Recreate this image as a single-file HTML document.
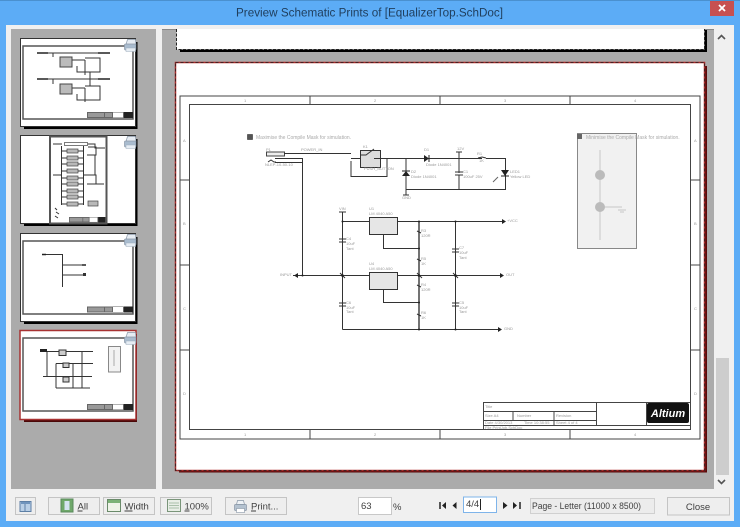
<!DOCTYPE html>
<html><head><meta charset="utf-8"><style>
html,body{margin:0;padding:0;background:#5cacf6;width:740px;height:527px;overflow:hidden}
svg{display:block;position:absolute;left:0;top:0}
text{font-family:"Liberation Sans",sans-serif}
#blur{filter:blur(.35px)}
.l{fill:none;stroke:#333;stroke-width:1}
.t{fill:#999;font-size:4px}
.b{fill:#eeeeee;stroke:#c4c4c4}
.bt{fill:#404040;font-size:9.5px}
</style></head><body>
<svg width="740" height="527" viewBox="0 0 740 527">
<defs>
<g id="pr"><path d="M3.500 0.500h8l.5 5h-10z" fill="#e6ecf3" stroke="#8a98a8" stroke-width=".7"/><rect x="0.500" y="5" width="11.500" height="6" rx="1" fill="#a9bccf" stroke="#8a98a8" stroke-width=".7"/><rect x="2" y="9" width="9.500" height="3.500" fill="#e6edf4" stroke="#a0aebd" stroke-width=".5"/></g>
<g id="tb"><rect x="0" y="0" width="46" height="6" fill="#666"/><rect x="1" y="1" width="16" height="4" fill="#999"/><rect x="18" y="1" width="7" height="4" fill="#999"/><rect x="26" y="0.500" width="10" height="5" fill="#fff"/><rect x="37" y="0" width="9" height="6" fill="#222"/></g>
</defs>
<rect width="740" height="527" fill="#5cacf6"/>
<rect x="0" y="0" width="740" height="1" fill="#4a90cf"/>
<text x="369.500" y="16.500" text-anchor="middle" font-size="12.300" fill="#203f5e" textLength="267" lengthAdjust="spacingAndGlyphs">Preview Schematic Prints of [EqualizerTop.SchDoc]</text>
<rect x="710" y="1" width="24" height="15" fill="#c75050"/>
<path d="M719 5l6 6M725 5l-6 6" stroke="#fff" stroke-width="1.800"/>
<rect x="6" y="25" width="728" height="496" fill="#f0f0f0"/>
<g id="blur">
<rect x="11" y="29" width="145" height="460" fill="#ababab"/>
<rect x="162" y="29" width="552" height="460" fill="#ababab"/>
<rect x="162" y="29" width="552" height="1" fill="#888"/>
<rect x="714" y="29" width="17" height="460" fill="#f0f0f0"/>
<rect x="716" y="358" width="13" height="117" fill="#cdcdcd"/>
<path d="M718 39l3.500-3.500 3.500 3.500" fill="none" stroke="#555" stroke-width="1.600"/>
<path d="M718 480l3.500 3.500 3.500-3.500" fill="none" stroke="#555" stroke-width="1.600"/>

<!-- previous page -->
<rect x="180" y="30" width="527" height="22" fill="#000"/>
<rect x="176.500" y="29" width="528" height="20.500" fill="#fff"/>
<path d="M176.500 29v20.500h528V29" fill="none" stroke="#222" stroke-dasharray="3 1.500"/>
<!-- current page -->
<rect x="179" y="66" width="528" height="406.500" fill="#5a0a0a"/>
<rect x="175.500" y="62.500" width="529" height="408" fill="#fff" stroke="#b02a2a" stroke-width="1.500"/>
<rect x="175.500" y="62.500" width="529" height="408" fill="none" stroke="#222" stroke-dasharray="3 2" stroke-width=".8"/>
<rect x="180" y="96" width="520" height="343" fill="#fff" stroke="#444"/>
<rect x="189.500" y="104.500" width="501" height="325" fill="#fff" stroke="#444"/>
<path d="M310 96v8M440 96v8M570 96v8M310 430v9M440 430v9M570 430v9M180 180h9M180 265h9M180 350h9M691 180h9M691 265h9M691 350h9" stroke="#444"/>
<g fill="#999" font-size="4"><text x="244" y="102">1</text><text x="374" y="102">2</text><text x="504" y="102">3</text><text x="634" y="102">4</text><text x="244" y="436">1</text><text x="374" y="436">2</text><text x="504" y="436">3</text><text x="634" y="436">4</text><text x="183" y="142">A</text><text x="183" y="225">B</text><text x="183" y="310">C</text><text x="183" y="395">D</text><text x="694" y="142">A</text><text x="694" y="225">B</text><text x="694" y="310">C</text><text x="694" y="395">D</text></g>

<!-- notes -->
<rect x="247.500" y="134.500" width="5" height="5" fill="#555" stroke="#333" stroke-width=".6"/>
<text x="256" y="139" font-size="5" fill="#aaa">Maximise the Compile Mask for simulation.</text>
<rect x="577.500" y="133.500" width="59" height="115" fill="#f1f1f1" stroke="#888"/>
<rect x="577" y="134" width="5" height="5" fill="#666"/>
<text x="586" y="139" font-size="5" fill="#aaa">Minimise the Compile Mask for simulation.</text>
<path d="M600 150V240M600 207h22M618 210h8M620 212h4" stroke="#c6c6c6" fill="none"/>
<circle cx="600" cy="175" r="5" fill="#bbb"/><circle cx="600" cy="207" r="5" fill="#bbb"/>

<!-- upper schematic -->
<rect x="266.500" y="152" width="18" height="4" fill="#eee" stroke="#444"/>
<path class="l" d="M284 153.500H351M268 162l3-2 3 2h2M275 158.500h27.500V275M275 162.500h27.500M351 161v15.500h36V158.500M351 158.500h9"/>
<rect x="360.500" y="150.500" width="20" height="17" fill="#ddd" stroke="#333"/>
<path class="l" d="M360 155h6l8-6M374 158.500h6"/>
<path class="l" d="M380 158.500H482M486 158.500H505.500V189.500H406V158.500M459 152V189.500M406 189.500V195"/>
<path d="M424 155v7l5-3.500z" fill="#222"/><path d="M429 155v7" stroke="#222"/>
<path d="M402 176h8l-4-5z" fill="#222"/><path d="M402 171h8" stroke="#222"/>
<path d="M501 170h8l-4 6z" fill="#222"/><path d="M501 176h8" stroke="#222"/>
<path d="M455 172h8M455 175h8" stroke="#333"/><rect x="456" y="173" width="6" height="1.500" fill="#fff"/>
<path d="M478 158l4-1 4 1" stroke="#333" fill="none"/>
<path d="M456 152h6" stroke="#333"/><path d="M403 195h6" stroke="#333"/>
<path d="M495 180l3-3M493 182l3-3" stroke="#666"/>
<g><text class="t" x="266" y="151">P1</text><text class="t" x="301" y="151">POWER_IN</text><text class="t" x="265" y="166">NLEP-10-50-10</text><text class="t" x="363" y="148">K1</text><text class="t" x="364" y="170">PUSH_BUTTON</text><text class="t" x="424" y="151">D1</text><text class="t" x="411" y="173">D2</text><text class="t" x="411" y="178">Diode 1N4001</text><text class="t" x="426" y="166">Diode 1N4001</text><text class="t" x="457" y="150">12V</text><text class="t" x="463" y="173">C1</text><text class="t" x="463" y="178">100uF 25V</text><text class="t" x="477" y="155">R1</text><text class="t" x="479" y="162">1K</text><text class="t" x="510" y="173">LED1</text><text class="t" x="510" y="178">Yellow LED</text><text class="t" x="402" y="199">GND</text></g>

<!-- lower schematic -->
<path class="l" d="M342.500 212V329.500M339 212h7M342.500 221.500H369M397 221.500H502M293 275.500H369M397 275.500H500M342.500 329.500H498M383.500 234V248.500H419M383.500 289V302.500H419M455.500 221.500V329.500"/>
<path d="M419 221.500V329.500" stroke="#444" stroke-width="1.500"/>
<rect x="369.500" y="217.500" width="28" height="17" fill="#e6e6e6" stroke="#333"/>
<rect x="369.500" y="272.500" width="28" height="17" fill="#e6e6e6" stroke="#333"/>
<path d="M502 219v5l4-2.500zM500 273v5l4-2.500zM498 327v5l4-2.500zM298 273v5l-4-2.500z" fill="#222"/>
<g stroke="#333" fill="none"><path d="M339 239h7M339 242h7M452 249h7M452 252h7M339 303h7M339 306h7M452 303h7M452 306h7"/><path d="M417 231l4 2M417 259l4 2M417 285l4 2M417 314l4 2M340 273l5 5M453 273l5 5M417 273l5 5"/></g>
<g fill="#222"><circle cx="342.500" cy="221.500" r="1"/><circle cx="342.500" cy="275.500" r="1.300"/><circle cx="419" cy="275.500" r="1.300"/><circle cx="455.500" cy="275.500" r="1.300"/><circle cx="302.500" cy="275.500" r="1"/><circle cx="419" cy="221.500" r="1"/><circle cx="455.500" cy="221.500" r="1"/><circle cx="419" cy="329.500" r="1"/><circle cx="455.500" cy="329.500" r="1"/><circle cx="419" cy="248.500" r="1"/><circle cx="419" cy="302.500" r="1"/></g>
<g><text class="t" x="369" y="210">U1</text><text class="t" x="369" y="215">LM 4040 A50</text><text class="t" x="369" y="265">U4</text><text class="t" x="369" y="270">LM 4040 A50</text><text class="t" x="339" y="210">VIN</text><text class="t" x="280" y="276">INPUT</text><text class="t" x="507" y="222">+VCC</text><text class="t" x="506" y="276">OUT</text><text class="t" x="504" y="330">GND</text>
<text class="t" x="346" y="240">C4</text><text class="t" x="346" y="245">10uF</text><text class="t" x="346" y="250">Tant</text><text class="t" x="346" y="304">C6</text><text class="t" x="346" y="309">10uF</text><text class="t" x="346" y="313">Tant</text>
<text class="t" x="459" y="249">C7</text><text class="t" x="459" y="254">10uF</text><text class="t" x="459" y="259">Tant</text><text class="t" x="459" y="304">C5</text><text class="t" x="459" y="309">10uF</text><text class="t" x="459" y="313">Tant</text>
<text class="t" x="421" y="232">R3</text><text class="t" x="421" y="237">120R</text><text class="t" x="421" y="260">R5</text><text class="t" x="421" y="265">1K</text><text class="t" x="421" y="286">R4</text><text class="t" x="421" y="291">120R</text><text class="t" x="421" y="314">R6</text><text class="t" x="421" y="319">1K</text></g>

<!-- title block -->
<path d="M483 402.500H690.500M483.500 402V430M483 411.500H596M483 420.500H596M596 425.500H483M483 425.500H690.500M596.500 402V425M646.500 402V425M513 411V420.500M554 411V425" stroke="#444" fill="none"/>
<rect x="647" y="403" width="42" height="20" rx="2" fill="#111"/>
<text x="668" y="417" text-anchor="middle" font-size="11" font-weight="bold" font-style="italic" fill="#fff">Altium</text>
<g><text class="t" x="485" y="408">Title</text><text class="t" x="485" y="417">Size A4</text><text class="t" x="517" y="417">Number</text><text class="t" x="556" y="417">Revision</text><text class="t" x="485" y="424">Date 4/30/2013</text><text class="t" x="524" y="424">Time 10:38:55</text><text class="t" x="556" y="424">Sheet 4 of 4</text><text class="t" x="485" y="429">File PrintJob.SchDoc</text></g>

<!-- thumbnail 1 -->
<rect x="24" y="42" width="113.500" height="87" fill="#000"/>
<rect x="20.500" y="38.500" width="115" height="88" fill="#fff" stroke="#333"/>
<rect x="23" y="46" width="110" height="73" fill="#fff" stroke="#555" stroke-width="1.500"/>
<path class="l" stroke-width=".8" d="M37 53h73M53 57V53M72 60h13M85 58h15V72H77V66M85 60V75M37 79h73M53 84V79M72 88h13M85 86h15V100H77V94M85 88V102M90 72V86"/>
<rect x="60" y="57" width="12" height="10" fill="#bbb" stroke="#444"/><rect x="60" y="84" width="12" height="10" fill="#bbb" stroke="#444"/>
<path d="M37 53h11M37 79h11M98 53h12M98 79h12" stroke="#222" stroke-width="1.500"/>
<use href="#tb" x="87" y="112"/><use href="#pr" x="124" y="39"/>

<!-- thumbnail 2 -->
<rect x="24" y="139" width="113.500" height="87" fill="#000"/>
<rect x="20.500" y="135.500" width="115" height="88" fill="#fff" stroke="#333"/>
<rect x="50" y="136.500" width="56.500" height="87" fill="#fff" stroke="#555" stroke-width="2"/>
<rect x="64.500" y="142.500" width="23" height="3" fill="#fff" stroke="#444" stroke-width=".7"/>
<g fill="#b9b9b9" stroke="#444" stroke-width=".7"><rect x="67" y="149" width="11" height="4"/><rect x="67" y="156" width="11" height="4"/><rect x="67" y="162" width="11" height="4"/><rect x="67" y="169" width="11" height="4"/><rect x="67" y="176" width="11" height="4"/><rect x="67" y="182" width="11" height="4"/><rect x="67" y="189" width="11" height="4"/><rect x="67" y="195" width="11" height="4"/><rect x="67" y="202" width="11" height="4"/><rect x="88" y="201" width="10" height="5"/></g>
<path class="l" stroke-width=".8" d="M61.500 146V205M83.500 146V205M61 151h6M78 151h6M61 158h6M78 158h6M61 164h6M78 164h6M61 171h6M78 171h6M61 178h6M78 178h6M61 184h6M78 184h6M61 191h6M78 191h6M61 197h6M78 197h6M61 204h6M78 204h6M88 144h7v4h10M88 147h8v8h-9M53 144h9M53 175h9M84 175h12v9h8M96 176v8h-9M95 155v20"/>
<g transform="translate(69 217) scale(.79 .9)"><use href="#tb"/></g><use href="#pr" x="124" y="136"/>
<path d="M55 208l2 2M56 212l3 2M55 216l3 2" stroke="#333"/>

<!-- thumbnail 3 -->
<rect x="24" y="237" width="113.500" height="87" fill="#000"/>
<rect x="20.500" y="233.500" width="115" height="88" fill="#fff" stroke="#333"/>
<rect x="23" y="241" width="110" height="73" fill="#fff" stroke="#555" stroke-width="1.500"/>
<path class="l" stroke-width=".8" d="M43 254.500h19.500V287M62.500 265h23M62.500 275h22"/>
<path d="M42 254.500h4M82 265h4" stroke="#222" stroke-width="1.500"/><rect x="83" y="273" width="3" height="3" fill="#333"/>
<use href="#tb" x="87" y="306.500"/><use href="#pr" x="124" y="234"/>

<!-- thumbnail 4 -->
<rect x="24" y="334" width="113" height="88" fill="#4a0808"/>
<rect x="20" y="330.500" width="116" height="89" fill="#fff" stroke="#a83232" stroke-width="1.500"/>
<rect x="23" y="338" width="110" height="73" fill="#fff" stroke="#555" stroke-width="1.500"/>
<path class="l" stroke-width=".8" d="M47 351.500H93M47 351.500V376.500M43 376.500H92M56 363.500H93M56 363.500V388M56 388H90M73 363.500V388M82 351.500V388"/>
<rect x="40" y="349" width="7" height="3" fill="#222"/>
<rect x="59" y="350" width="7" height="5.500" fill="#ccc" stroke="#333"/>
<rect x="63" y="363" width="6" height="4.500" fill="#ccc" stroke="#333"/><rect x="63" y="377" width="6" height="5" fill="#ccc" stroke="#333"/>
<rect x="108.500" y="346.500" width="12" height="25.500" fill="#f2f2f2" stroke="#888"/>
<path d="M114 350v16" stroke="#aaa"/>
<use href="#tb" x="87" y="404"/><use href="#pr" x="124" y="332"/>

<!-- toolbar -->
<rect x="15.500" y="497.500" width="20" height="17" class="b"/>
<rect x="20" y="501.500" width="11" height="10" fill="#b9cfe6" stroke="#5d7fa5"/><path d="M25 501v10" stroke="#5d7fa5"/><rect x="21" y="502" width="9" height="2" fill="#6f94bd"/>
<rect x="48.500" y="497.500" width="51" height="17" class="b"/>
<rect x="61" y="499" width="12" height="13" fill="#6fa86a" stroke="#5a8a5c"/><rect x="64.500" y="501" width="5" height="9" fill="#d5e4f2"/>
<text class="bt" x="77.500" y="509.500">All</text><path d="M77.500 511h5" stroke="#404040"/>
<rect x="103.500" y="497.500" width="51" height="17" class="b"/>
<rect x="107.500" y="499.500" width="13" height="12" fill="#eef3e8" stroke="#6a8a6a"/><rect x="108" y="500" width="12" height="3" fill="#7cb277"/>
<text class="bt" x="124.500" y="509.500">Width</text><path d="M124.500 511h8" stroke="#404040"/>
<rect x="160.500" y="497.500" width="51" height="17" class="b"/>
<rect x="167.500" y="499.500" width="13" height="12" fill="#e8eee6" stroke="#7a957a"/><path d="M169 503h10M169 505.500h10M169 508h10" stroke="#aac0aa"/>
<text class="bt" x="184.500" y="509.500">100%</text><path d="M184.500 511h5" stroke="#404040"/>
<rect x="225.500" y="497.500" width="61" height="17" class="b"/>
<g transform="translate(234.500 500.500)"><path d="M3 0h6l1 4H2z" fill="#eef2f6" stroke="#8895a5" stroke-width=".7"/><rect x="0" y="4" width="12" height="6" rx="1" fill="#b4c2d0" stroke="#8895a5" stroke-width=".7"/><rect x="2" y="8" width="8" height="4" fill="#fff" stroke="#8895a5" stroke-width=".6"/></g>
<text class="bt" x="251" y="509.500">Print...</text><path d="M251 511h5" stroke="#404040"/>

<rect x="358.500" y="497.500" width="33" height="17" fill="#fff" stroke="#c8c8c8"/>
<text class="bt" x="361" y="509">63</text><text class="bt" x="393" y="510">%</text>
<path d="M440 502v7" stroke="#222" stroke-width="1.500"/><path d="M446 502v7l-4-3.500zM456.500 502v7l-4-3.500zM503 502v7l4.500-3.500zM513 502v7l4-3.500z" fill="#222"/><path d="M520 502v7" stroke="#222" stroke-width="1.500"/>
<rect x="463.500" y="497" width="33" height="15.500" fill="#fff" stroke="#7eb4ea"/>
<text class="bt" x="466" y="507">4/4</text><path d="M480.500 499v11" stroke="#222"/>
<rect x="530.500" y="498.500" width="124" height="15" fill="#ececec" stroke="#d0d0d0"/>
<text class="bt" x="532" y="509" textLength="109" lengthAdjust="spacingAndGlyphs">Page - Letter (11000 x 8500)</text>
<rect x="667.500" y="497.500" width="62" height="17.500" class="b"/>
<text class="bt" x="698" y="510" text-anchor="middle">Close</text>
</g>
</svg>
</body></html>
